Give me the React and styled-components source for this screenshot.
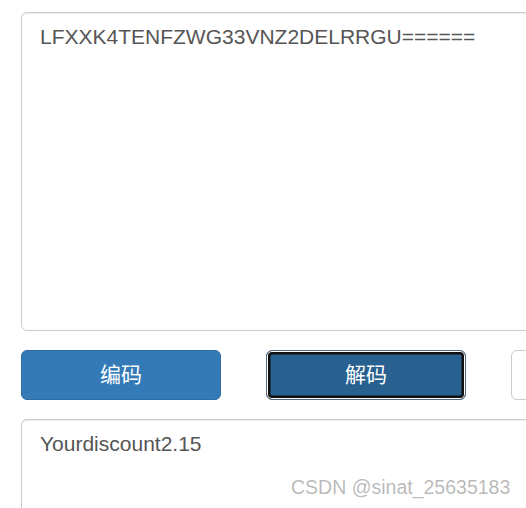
import React from "react";
import styled, { createGlobalStyle } from "styled-components";

const GlobalStyle = createGlobalStyle`
  html, body {
    margin: 0;
    padding: 0;
    background: #fff;
    overflow: hidden;
  }
  body {
    font-family: "Liberation Sans", Arial, "Noto Sans CJK SC", sans-serif;
  }
`;

const Page = styled.div`
  width: 760px;
  padding: 12px 0 0 21px;
  display: flex;
  flex-direction: column;
  gap: 19px;
`;

const TextBox = styled.textarea`
  display: block;
  box-sizing: border-box;
  width: 720px;
  height: ${(p) => p.$height}px;
  margin: 0;
  padding: 9px 18px;
  border: 1px solid #ccc;
  border-radius: 6px;
  box-shadow: inset 0 1px 1px rgba(0, 0, 0, 0.075);
  font-family: "Liberation Sans", Arial, sans-serif;
  font-size: 21px;
  line-height: 30px;
  color: #555;
  background: #fff;
  resize: none;
  outline: none;
`;

const ButtonRow = styled.div`
  display: flex;
  gap: 45px;
`;

const Button = styled.button`
  box-sizing: border-box;
  width: 200px;
  height: 50px;
  flex: none;
  display: flex;
  align-items: center;
  justify-content: center;
  padding: 0 0 5px;
  border-radius: 6px;
  font-family: "Liberation Sans", "Noto Sans CJK SC", sans-serif;
  font-size: 21px;
  cursor: pointer;
  color: ${(p) => (p.$variant === "default" ? "#333" : "#fff")};
  background: ${(p) =>
    p.$variant === "active"
      ? "#286090"
      : p.$variant === "default"
      ? "#fff"
      : "#337ab7"};
  border: 1px solid
    ${(p) =>
      p.$variant === "active"
        ? "#56687a"
        : p.$variant === "default"
        ? "#ccc"
        : "#2e6da4"};
  box-shadow: ${(p) =>
    p.$variant === "active"
      ? "inset 0 0 0 1px #fff, inset 0 0 0 3.5px #111"
      : "none"};
`;

const Output = styled.div`
  position: relative;
`;

const Watermark = styled.span`
  position: absolute;
  left: 270px;
  top: 57px;
  font-family: "Liberation Sans", Arial, sans-serif;
  font-size: 19.5px;
  color: rgba(140, 140, 140, 0.6);
  white-space: nowrap;
  pointer-events: none;
`;

export default function App() {
  return (
    <>
      <GlobalStyle />
      <Page>
        <TextBox
          $height={319}
          readOnly
          defaultValue="LFXXK4TENFZWG33VNZ2DELRRGU======"
        />
        <ButtonRow>
          <Button $variant="primary">编码</Button>
          <Button $variant="active">解码</Button>
          <Button $variant="default" aria-label="清空" />
        </ButtonRow>
        <Output>
          <TextBox $height={200} readOnly defaultValue="Yourdiscount2.15" />
          <Watermark>CSDN @sinat_25635183</Watermark>
        </Output>
      </Page>
    </>
  );
}
